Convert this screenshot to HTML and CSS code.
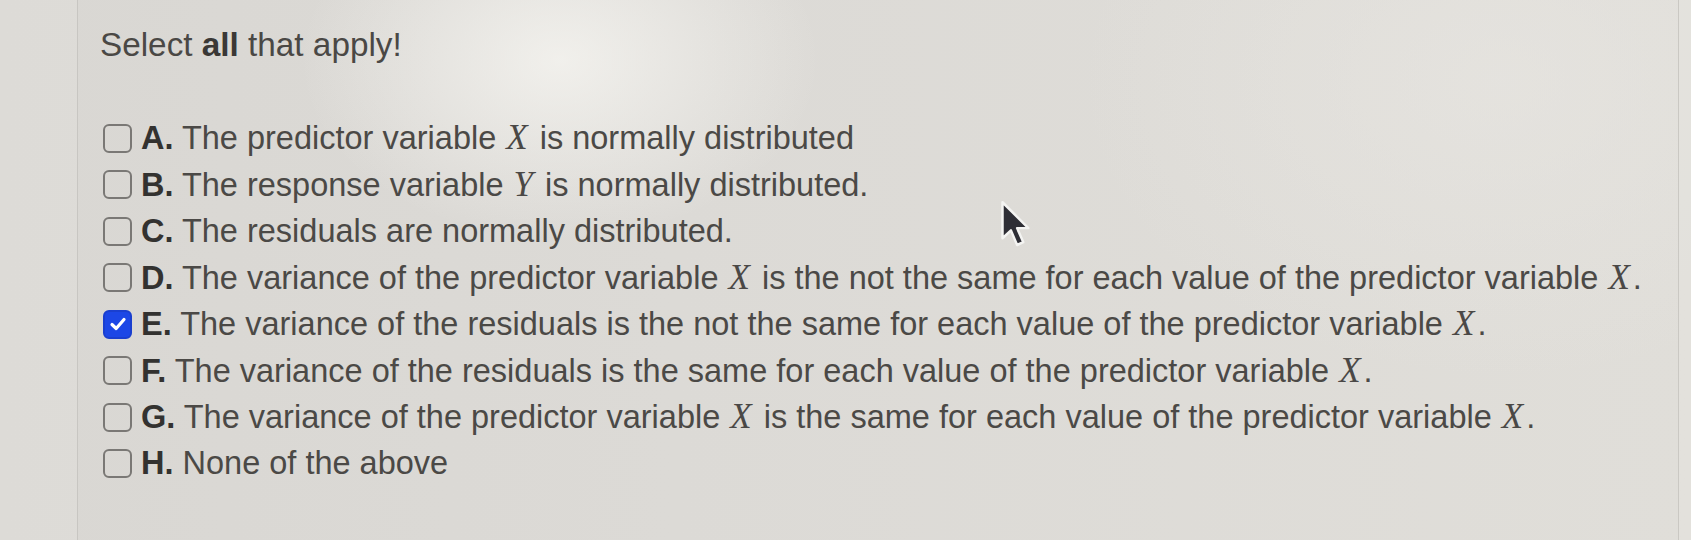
FILE: index.html
```html
<!DOCTYPE html>
<html lang="en">
<head>
<meta charset="utf-8">
<title>Select all that apply</title>
<link rel="stylesheet" href="styles.css">
</head>
<body>
<div class="screen">
  <div class="edge-left"></div>
  <main class="panel">
    <p class="prompt">Select <b>all</b> that apply!</p>
    <ul class="options">
      <li class="option"><span class="box"></span><span class="label"><b>A.</b> The predictor variable <i class="math">X</i> is normally distributed</span></li>
      <li class="option"><span class="box"></span><span class="label"><b>B.</b> The response variable <i class="math">Y</i> is normally distributed.</span></li>
      <li class="option"><span class="box"></span><span class="label"><b>C.</b> The residuals are normally distributed.</span></li>
      <li class="option"><span class="box"></span><span class="label"><b>D.</b> The variance of the predictor variable <i class="math">X</i> is the not the same for each value of the predictor variable <i class="math">X</i>.</span></li>
      <li class="option"><span class="box checked"><svg viewBox="0 0 20 20" width="20" height="20"><path d="M4 10.5 L8.2 14.5 L16 5.5" fill="none" stroke="#fff" stroke-width="3.2" stroke-linecap="round" stroke-linejoin="round"/></svg></span><span class="label"><b>E.</b> The variance of the residuals is the not the same for each value of the predictor variable <i class="math">X</i>.</span></li>
      <li class="option"><span class="box"></span><span class="label"><b>F.</b> The variance of the residuals is the same for each value of the predictor variable <i class="math">X</i>.</span></li>
      <li class="option"><span class="box"></span><span class="label"><b>G.</b> The variance of the predictor variable <i class="math">X</i> is the same for each value of the predictor variable <i class="math">X</i>.</span></li>
      <li class="option"><span class="box"></span><span class="label"><b>H.</b> None of the above</span></li>
    </ul>
    <svg class="cursor" viewBox="0 0 30 48" width="34" height="54"><path d="M3 2 L3 34 L10.5 27 L16 40 L21.5 37.5 L16 25 L26 25 Z" fill="#2e2e35" stroke="#f4f4f2" stroke-width="2.2" stroke-linejoin="round"/></svg>
  </main>
  <div class="edge-right"></div>
</div>
</body>
</html>
```
FILE: styles.css
```css
html, body {
  margin: 0;
  padding: 0;
}
body {
  width: 1691px;
  height: 540px;
  overflow: hidden;
  font-family: "Liberation Sans", Arial, sans-serif;
  color: #4b4946;
}
.screen {
  display: flex;
  height: 540px;
  background:
    radial-gradient(ellipse 260px 180px at 560px 60px, rgba(248,247,243,0.75), rgba(248,247,243,0) 100%),
    radial-gradient(ellipse 420px 300px at 1500px 80px, rgba(232,230,226,0.6), rgba(232,230,226,0) 100%),
    linear-gradient(90deg, #d9d7d3 0%, #dcdad6 40%, #e0ded9 100%);
}
.edge-left {
  width: 77px;
  flex: none;
  border-right: 1px solid #c8c6c2;
  background: rgba(225,223,219,0.5);
}
.edge-right {
  width: 12px;
  flex: none;
  border-left: 1px solid #cac8c3;
  background: rgba(228,226,222,0.6);
}
.panel {
  position: relative;
  flex: 1;
  padding: 25px 0 0 22px;
}
.prompt {
  margin: 0 0 50px 0;
  font-size: 33.3px;
  line-height: 40px;
  color: #4a4845;
}
.prompt b {
  color: #3a3836;
}
.options {
  list-style: none;
  margin: 0;
  padding: 0 0 0 3px;
  display: flex;
  flex-direction: column;
}
.option {
  display: flex;
  align-items: center;
  height: 46.5px;
  font-size: 32.5px;
}
.box {
  width: 25px;
  height: 25px;
  flex: none;
  border: 2px solid #7a7875;
  border-radius: 6px;
  margin-right: 9px;
  display: flex;
  align-items: center;
  justify-content: center;
}
.box.checked {
  background: #1c47e6;
  border-color: #1a3fcf;
}
.label b {
  color: #333230;
}
.math {
  font-family: "Liberation Serif", "Times New Roman", serif;
  font-style: italic;
  font-size: 35px;
  color: #4a4846;
  padding: 0 3px 0 1px;
}
.cursor {
  position: absolute;
  left: 921px;
  top: 200px;
}
```
